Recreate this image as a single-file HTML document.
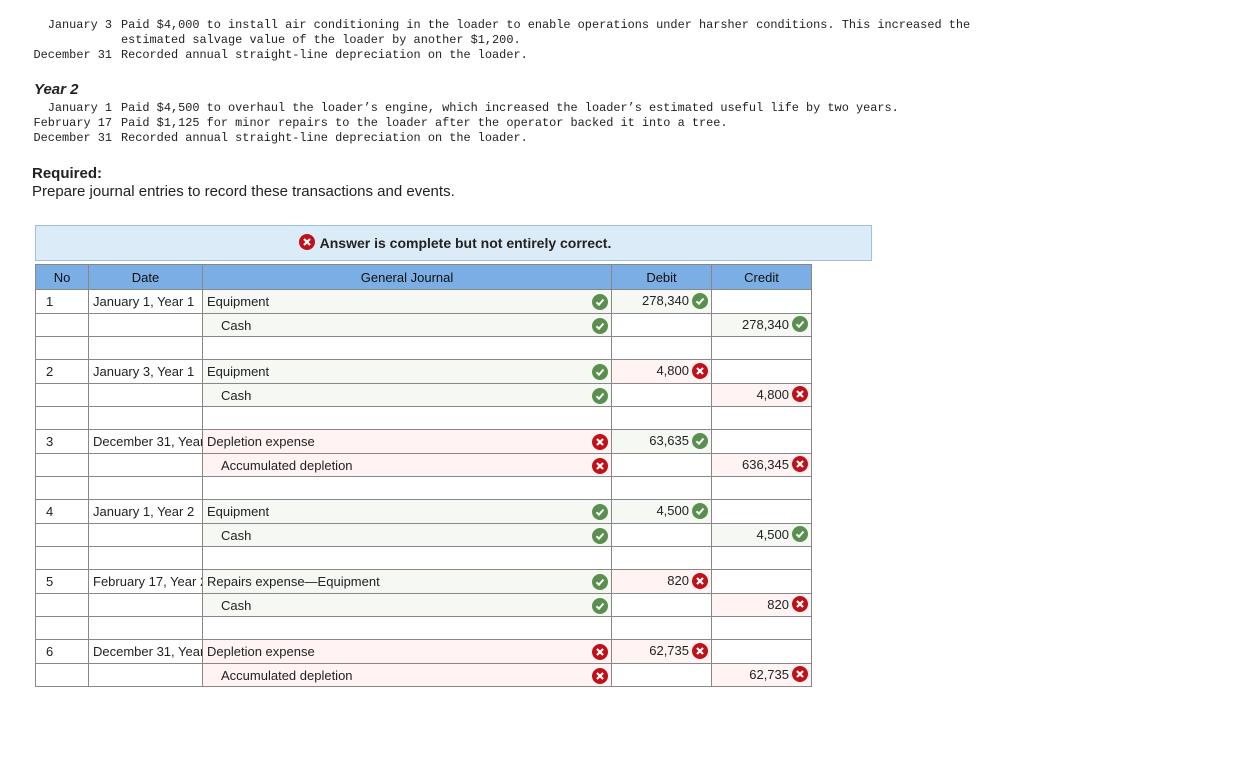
<!DOCTYPE html>
<html><head><meta charset="utf-8"><style>
body{margin:0;background:#fff;width:1260px;height:768px;position:relative;overflow:hidden;font-family:"Liberation Sans",sans-serif;color:#222}
.m{position:absolute;font-family:"Liberation Mono",monospace;font-size:11.9px;white-space:pre;line-height:15px;color:#222}
.l{width:80px;text-align:right;left:32px}
.d{left:121px}
.y2{position:absolute;left:34px;top:81px;font-weight:bold;font-style:italic;font-size:15px}
.rq{position:absolute;left:32px;top:165px;font-weight:bold;font-size:15px}
.pr{position:absolute;left:32px;top:183px;font-size:15px}
.ban{position:absolute;left:35px;top:225px;width:837px;height:36px;background:#dcebf8;border:1px solid #9cc0e2;box-sizing:border-box;text-align:center;font-weight:bold;font-size:14px;line-height:35px;color:#222}
table{position:absolute;left:35px;top:264px;width:776px;border-collapse:collapse;table-layout:fixed;font-size:13px}
td,th{border:1px solid #888;padding:0 4px;white-space:nowrap;overflow:hidden;height:22px}
tr.e td{height:23px}
th{background:#7aaee4;font-weight:normal;height:24px;color:#111}
td.n{padding-left:10px}
.g{background:#f5f8f3}.r{background:#fff3f3}
.num{text-align:right;padding-right:3px}
.ic{display:inline-block;width:16px;height:16px;border-radius:50%;vertical-align:middle;margin-left:3px;position:relative;top:-1px}
.ck{background:#5b8f4f}.xx{background:#c0111a}
.ic svg{position:absolute;left:0;top:0}
.jc{position:relative}
.jc .ic{position:absolute;right:3px;top:4px}
</style></head><body>
<div class="m l" style="top:18px">January 3</div><div class="m d" style="top:18px">Paid $4,000 to install air conditioning in the loader to enable operations under harsher conditions. This increased the</div>
<div class="m d" style="top:33px">estimated salvage value of the loader by another $1,200.</div>
<div class="m l" style="top:48px">December 31</div><div class="m d" style="top:48px">Recorded annual straight-line depreciation on the loader.</div>
<div class="y2">Year 2</div>
<div class="m l" style="top:101px">January 1</div><div class="m d" style="top:101px">Paid $4,500 to overhaul the loader’s engine, which increased the loader’s estimated useful life by two years.</div>
<div class="m l" style="top:116px">February 17</div><div class="m d" style="top:116px">Paid $1,125 for minor repairs to the loader after the operator backed it into a tree.</div>
<div class="m l" style="top:131px">December 31</div><div class="m d" style="top:131px">Recorded annual straight-line depreciation on the loader.</div>
<div class="rq">Required:</div>
<div class="pr">Prepare journal entries to record these transactions and events.</div>
<div class="ban"><span class="ic xx" style="margin-right:5px;top:-2px"><svg width="16" height="16"><path d="M5 5L11 11M11 5L5 11" stroke="#fff" stroke-width="2.2"/></svg></span>Answer is complete but not entirely correct.</div>
<table>
<colgroup><col style="width:53px"><col style="width:114px"><col style="width:409px"><col style="width:100px"><col style="width:100px"></colgroup>
<tr><th>No</th><th>Date</th><th>General Journal</th><th>Debit</th><th>Credit</th></tr>

<tr class="e"><td class="n">1</td><td>January 1, Year 1</td><td class="g jc">Equipment<span class="ic ck"><svg width="16" height="16"><path d="M4.5 8.3L7 10.7L11.5 5.5" stroke="#fff" stroke-width="2" fill="none"/></svg></span></td><td class="num g">278,340<span class="ic ck"><svg width="16" height="16"><path d="M4.5 8.3L7 10.7L11.5 5.5" stroke="#fff" stroke-width="2" fill="none"/></svg></span></td><td></td></tr>
<tr><td></td><td></td><td class="g jc" style="padding-left:18px">Cash<span class="ic ck"><svg width="16" height="16"><path d="M4.5 8.3L7 10.7L11.5 5.5" stroke="#fff" stroke-width="2" fill="none"/></svg></span></td><td></td><td class="num g">278,340<span class="ic ck"><svg width="16" height="16"><path d="M4.5 8.3L7 10.7L11.5 5.5" stroke="#fff" stroke-width="2" fill="none"/></svg></span></td></tr>
<tr><td></td><td></td><td></td><td></td><td></td></tr>

<tr class="e"><td class="n">2</td><td>January 3, Year 1</td><td class="g jc">Equipment<span class="ic ck"><svg width="16" height="16"><path d="M4.5 8.3L7 10.7L11.5 5.5" stroke="#fff" stroke-width="2" fill="none"/></svg></span></td><td class="num r">4,800<span class="ic xx"><svg width="16" height="16"><path d="M5 5L11 11M11 5L5 11" stroke="#fff" stroke-width="2.2"/></svg></span></td><td></td></tr>
<tr><td></td><td></td><td class="g jc" style="padding-left:18px">Cash<span class="ic ck"><svg width="16" height="16"><path d="M4.5 8.3L7 10.7L11.5 5.5" stroke="#fff" stroke-width="2" fill="none"/></svg></span></td><td></td><td class="num r">4,800<span class="ic xx"><svg width="16" height="16"><path d="M5 5L11 11M11 5L5 11" stroke="#fff" stroke-width="2.2"/></svg></span></td></tr>
<tr><td></td><td></td><td></td><td></td><td></td></tr>

<tr class="e"><td class="n">3</td><td>December 31, Year 1</td><td class="r jc">Depletion expense<span class="ic xx"><svg width="16" height="16"><path d="M5 5L11 11M11 5L5 11" stroke="#fff" stroke-width="2.2"/></svg></span></td><td class="num g">63,635<span class="ic ck"><svg width="16" height="16"><path d="M4.5 8.3L7 10.7L11.5 5.5" stroke="#fff" stroke-width="2" fill="none"/></svg></span></td><td></td></tr>
<tr><td></td><td></td><td class="r jc" style="padding-left:18px">Accumulated depletion<span class="ic xx"><svg width="16" height="16"><path d="M5 5L11 11M11 5L5 11" stroke="#fff" stroke-width="2.2"/></svg></span></td><td></td><td class="num r">636,345<span class="ic xx"><svg width="16" height="16"><path d="M5 5L11 11M11 5L5 11" stroke="#fff" stroke-width="2.2"/></svg></span></td></tr>
<tr><td></td><td></td><td></td><td></td><td></td></tr>

<tr class="e"><td class="n">4</td><td>January 1, Year 2</td><td class="g jc">Equipment<span class="ic ck"><svg width="16" height="16"><path d="M4.5 8.3L7 10.7L11.5 5.5" stroke="#fff" stroke-width="2" fill="none"/></svg></span></td><td class="num g">4,500<span class="ic ck"><svg width="16" height="16"><path d="M4.5 8.3L7 10.7L11.5 5.5" stroke="#fff" stroke-width="2" fill="none"/></svg></span></td><td></td></tr>
<tr><td></td><td></td><td class="g jc" style="padding-left:18px">Cash<span class="ic ck"><svg width="16" height="16"><path d="M4.5 8.3L7 10.7L11.5 5.5" stroke="#fff" stroke-width="2" fill="none"/></svg></span></td><td></td><td class="num g">4,500<span class="ic ck"><svg width="16" height="16"><path d="M4.5 8.3L7 10.7L11.5 5.5" stroke="#fff" stroke-width="2" fill="none"/></svg></span></td></tr>
<tr><td></td><td></td><td></td><td></td><td></td></tr>

<tr class="e"><td class="n">5</td><td>February 17, Year 2</td><td class="g jc">Repairs expense—Equipment<span class="ic ck"><svg width="16" height="16"><path d="M4.5 8.3L7 10.7L11.5 5.5" stroke="#fff" stroke-width="2" fill="none"/></svg></span></td><td class="num r">820<span class="ic xx"><svg width="16" height="16"><path d="M5 5L11 11M11 5L5 11" stroke="#fff" stroke-width="2.2"/></svg></span></td><td></td></tr>
<tr><td></td><td></td><td class="g jc" style="padding-left:18px">Cash<span class="ic ck"><svg width="16" height="16"><path d="M4.5 8.3L7 10.7L11.5 5.5" stroke="#fff" stroke-width="2" fill="none"/></svg></span></td><td></td><td class="num r">820<span class="ic xx"><svg width="16" height="16"><path d="M5 5L11 11M11 5L5 11" stroke="#fff" stroke-width="2.2"/></svg></span></td></tr>
<tr><td></td><td></td><td></td><td></td><td></td></tr>

<tr class="e"><td class="n">6</td><td>December 31, Year 2</td><td class="r jc">Depletion expense<span class="ic xx"><svg width="16" height="16"><path d="M5 5L11 11M11 5L5 11" stroke="#fff" stroke-width="2.2"/></svg></span></td><td class="num r">62,735<span class="ic xx"><svg width="16" height="16"><path d="M5 5L11 11M11 5L5 11" stroke="#fff" stroke-width="2.2"/></svg></span></td><td></td></tr>
<tr><td></td><td></td><td class="r jc" style="padding-left:18px">Accumulated depletion<span class="ic xx"><svg width="16" height="16"><path d="M5 5L11 11M11 5L5 11" stroke="#fff" stroke-width="2.2"/></svg></span></td><td></td><td class="num r">62,735<span class="ic xx"><svg width="16" height="16"><path d="M5 5L11 11M11 5L5 11" stroke="#fff" stroke-width="2.2"/></svg></span></td></tr>
</table>
</body></html>
